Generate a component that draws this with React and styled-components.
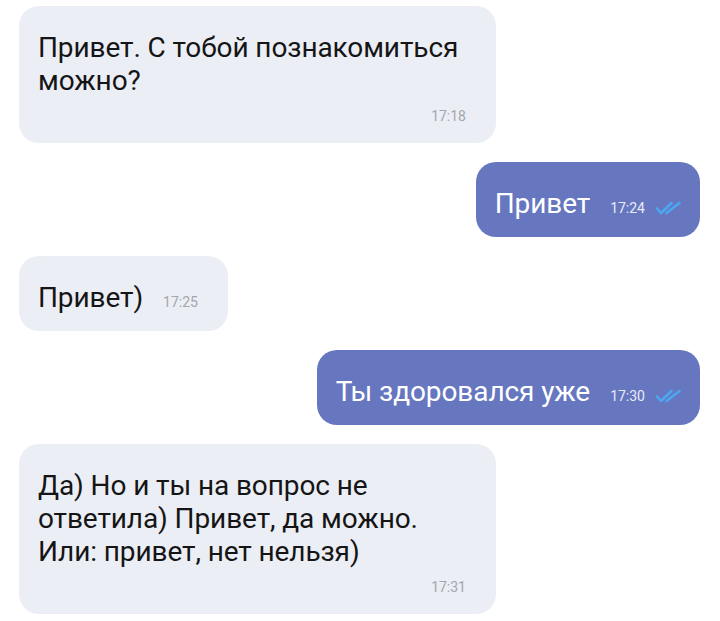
import React from "react";
import styled, { createGlobalStyle } from "styled-components";

const GlobalStyle = createGlobalStyle`
  html, body {
    margin: 0;
    padding: 0;
    background: #ffffff;
  }
  body {
    font-family: Roboto, "Noto Sans", "Liberation Sans", sans-serif;
    -webkit-font-smoothing: antialiased;
  }
`;

const messages = [
  { id: 1, out: false, text: "Привет. С тобой познакомиться можно?", time: "17:18" },
  { id: 2, out: true, text: "Привет", time: "17:24" },
  { id: 3, out: false, text: "Привет)", time: "17:25" },
  { id: 4, out: true, text: "Ты здоровался уже", time: "17:30" },
  {
    id: 5,
    out: false,
    text: "Да) Но и ты на вопрос не ответила) Привет, да можно. Или: привет, нет нельзя)",
    time: "17:31",
  },
];

export default function App() {
  return (
    <>
      <GlobalStyle />
      <Chat>
        {messages.map((m) => (
          <Row key={m.id} $out={m.out}>
            <Bubble $out={m.out}>
              <Text>{m.text}</Text>
              <Meta $out={m.out}>
                <Time $out={m.out}>{m.time}</Time>
                {m.out && <ReadMark />}
              </Meta>
            </Bubble>
          </Row>
        ))}
      </Chat>
    </>
  );
}

// double tick, read
function ReadMark() {
  return (
    <Checks width="27" height="14" viewBox="0 0 27 14">
      <path d="M2 7.5 L6 12 L16.5 2" />
      <path d="M11.5 12 L24.5 2" />
    </Checks>
  );
}

const Chat = styled.div`
  display: flex;
  flex-direction: column;
  gap: 19px;
  padding: 6px 20px 6px 19px;
`;

const Row = styled.div`
  display: flex;
  justify-content: ${(p) => (p.$out ? "flex-end" : "flex-start")};
`;

const Bubble = styled.div`
  display: flex;
  flex-wrap: wrap;
  align-items: baseline;
  column-gap: 20px;
  box-sizing: border-box;
  max-width: 477px;
  padding: 25px ${(p) => (p.$out ? "18px" : "30px")} 17px 19px;
  border-radius: 20px;
  background: ${(p) => (p.$out ? "#6677c0" : "#eceef5")};
  color: ${(p) => (p.$out ? "#ffffff" : "#151515")};
`;

const Text = styled.span`
  font-size: 28px;
  line-height: 33px;
  letter-spacing: -0.1px;
`;

const Meta = styled.span`
  display: inline-flex;
  align-items: center;
  gap: 10px;
  margin-left: auto;
  margin-top: 9px;
  line-height: 20px;
`;

const Time = styled.span`
  font-size: 14px;
  color: ${(p) => (p.$out ? "#e8ebf7" : "#a2a6ae")};
`;

const Checks = styled.svg`
  fill: none;
  stroke: #4ca6f0;
  stroke-width: 2.6;
  stroke-linecap: round;
  stroke-linejoin: round;
`;
